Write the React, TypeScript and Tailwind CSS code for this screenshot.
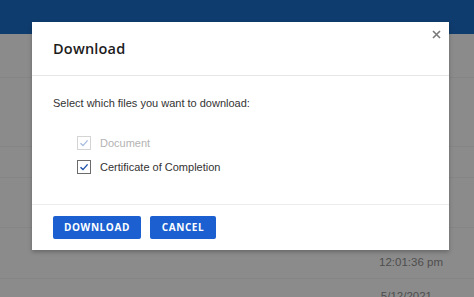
import React from "react";

function Check({ disabled }: { disabled?: boolean }) {
  return (
    <div
      className={`w-[14px] h-[14px] border flex items-center justify-center bg-white ${
        disabled ? "border-[#d4d4d4]" : "border-[#6b6b6b]"
      }`}
    >
      <svg width="10" height="10" viewBox="0 0 10 10">
        <path
          d="M1.5 5.2 L4 7.6 L8.6 2.4"
          fill="none"
          stroke={disabled ? "#a9bde0" : "#1d4fa8"}
          strokeWidth="1.4"
        />
      </svg>
    </div>
  );
}

export default function App() {
  const rows = [44, 69, 31, 50, 51, 30];
  return (
    <div className="relative w-[474px] h-[297px] overflow-hidden bg-[#8b8b8b]" style={{ fontFamily: "'Liberation Sans', Arial, sans-serif" }}>
      <div className="h-[34px] bg-[#0f3c6e]" />
      <div className="flex flex-col">
        {rows.map((h, i) => (
          <div key={i} className="border-b border-[#858585]" style={{ height: h }} />
        ))}
      </div>
      <div className="absolute right-[31px] top-[254px] text-[11.5px] text-[#4e4e4e]">12:01:36 pm</div>
      <div className="absolute right-[42px] top-[288px] text-[11.5px] text-[#4e4e4e]">5/12/2021</div>

      <div className="absolute left-[32px] top-[22px] w-[417px] h-[228px] bg-white shadow-[0_2px_4px_rgba(0,0,0,0.25)] flex flex-col">
        <div className="relative h-[54px] border-b border-[#e6e6e6] flex items-center pl-[21px] pt-[1px]">
          <span className="text-[14.5px] font-semibold text-[#1c1c1c] tracking-[0.2px]" style={{ fontFamily: "'Open Sans', sans-serif" }}>
            Download
          </span>
          <svg className="absolute right-[8px] top-[8px]" width="9" height="9" viewBox="0 0 9 9">
            <path d="M1 1 L8 8 M8 1 L1 8" stroke="#7a7a7a" strokeWidth="1.6" />
          </svg>
        </div>
        <div className="h-[129px] border-b border-[#ececec] pl-[21px] pt-[21px]">
          <div className="text-[11px] leading-[13px] text-[#333]">Select which files you want to download:</div>
          <div className="flex flex-col gap-[10px] mt-[26px] pl-[24px]">
            <div className="flex items-center gap-[9px] h-[14px]">
              <Check disabled />
              <span className="text-[11px] text-[#b3b3b3]">Document</span>
            </div>
            <div className="flex items-center gap-[9px] h-[14px]">
              <Check />
              <span className="text-[11px] text-[#333]">Certificate of Completion</span>
            </div>
          </div>
        </div>
        <div className="flex items-start gap-[9px] pl-[21px] pt-[11px]">
          <button className="h-[23px] w-[88px] rounded-[2px] bg-[#1b5fd1] text-white text-[10px] font-bold tracking-[0.6px]" style={{ fontFamily: "'Open Sans', sans-serif" }}>
            DOWNLOAD
          </button>
          <button className="h-[23px] w-[66px] rounded-[2px] bg-[#1b5fd1] text-white text-[10px] font-bold tracking-[0.6px]" style={{ fontFamily: "'Open Sans', sans-serif" }}>
            CANCEL
          </button>
        </div>
      </div>
    </div>
  );
}
